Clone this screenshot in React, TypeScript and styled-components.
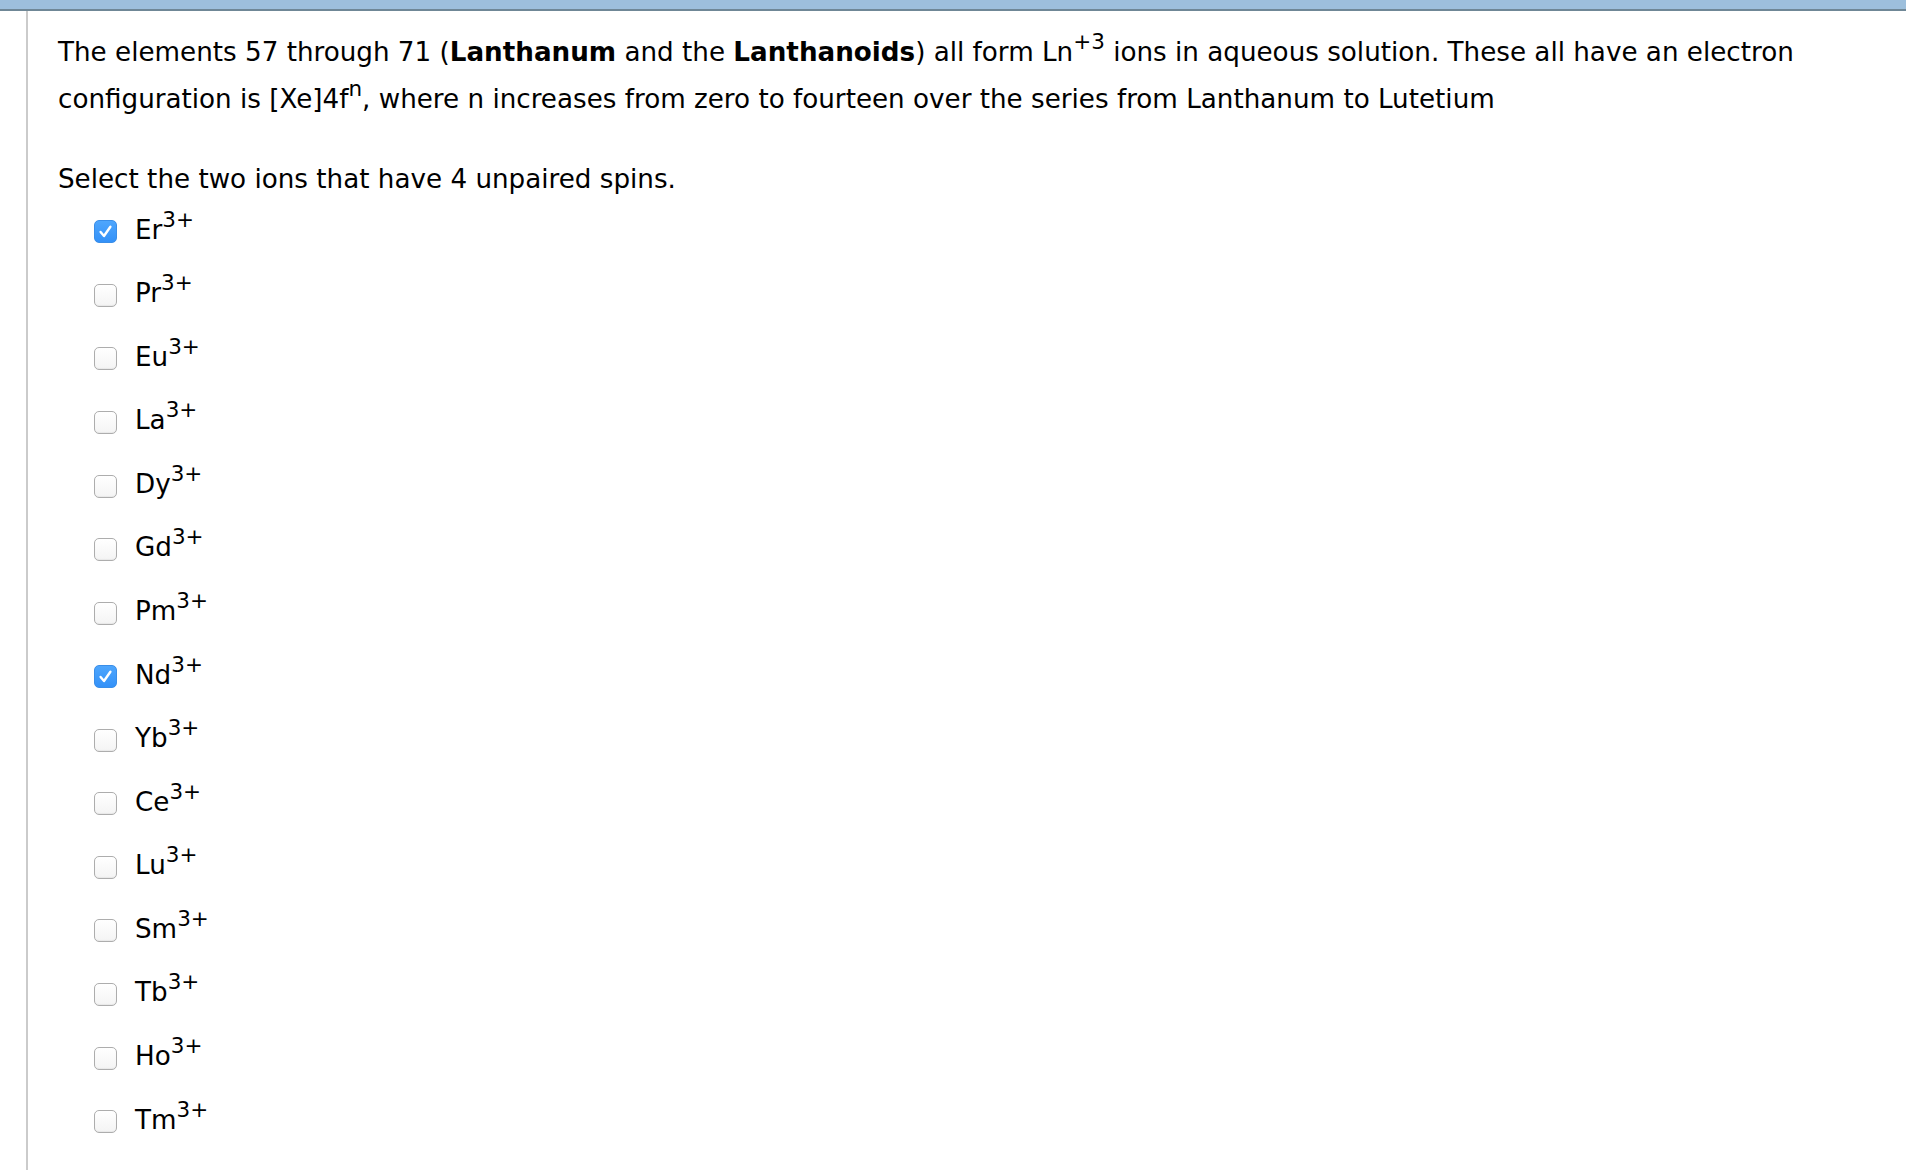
import styled, { createGlobalStyle } from "styled-components";

const GlobalStyle = createGlobalStyle`
  html, body {
    margin: 0;
    padding: 0;
    background: #ffffff;
  }
  body {
    font-family: "DejaVu Sans", Verdana, sans-serif;
    color: #000000;
  }
`;

const TopBar = styled.div`
  height: 9px;
  background-color: #9dbfdc;
  border-bottom: 2px solid #6f8796;
`;

const Page = styled.div`
  margin-left: 26px;
  border-left: 2px solid #cbcbcb;
  min-height: calc(100vh - 11px);
  padding: 18px 40px 0 30px;
  box-sizing: border-box;
`;

const Intro = styled.p`
  margin: 0;
  font-size: 26.2px;
  line-height: 47px;
`;

const Prompt = styled.p`
  margin: 33px 0 0 0;
  font-size: 26.2px;
  line-height: 47px;
`;

const Sup = styled.sup`
  font-size: 0.82em;
  line-height: 0;
  vertical-align: 0.55em;
`;

const OptionList = styled.ul`
  list-style: none;
  margin: -5px 0 0 0;
  padding: 0 0 0 36px;
`;

const OptionRow = styled.li`
  height: 63.57px;
  display: flex;
  align-items: center;
  gap: 18px;
  font-size: 26.2px;
`;

const Box = styled.span<{ $checked: boolean }>`
  width: 23px;
  height: 23px;
  box-sizing: border-box;
  border-radius: 5px;
  display: flex;
  align-items: center;
  justify-content: center;
  flex-shrink: 0;
  margin-top: 4px;
  background: ${(p) =>
    p.$checked ? "linear-gradient(#4ea6fd, #3391f8)" : "linear-gradient(#ffffff, #f4f4f4)"};
  border: 1px solid ${(p) => (p.$checked ? "#3a8ee8" : "#adadad")};
  box-shadow: ${(p) => (p.$checked ? "none" : "inset 0 -1px 1px rgba(0,0,0,0.05)")};
`;

const Label = styled.span`
  line-height: 1;
`;

const ions: { sym: string; checked: boolean }[] = [
  { sym: "Er", checked: true },
  { sym: "Pr", checked: false },
  { sym: "Eu", checked: false },
  { sym: "La", checked: false },
  { sym: "Dy", checked: false },
  { sym: "Gd", checked: false },
  { sym: "Pm", checked: false },
  { sym: "Nd", checked: true },
  { sym: "Yb", checked: false },
  { sym: "Ce", checked: false },
  { sym: "Lu", checked: false },
  { sym: "Sm", checked: false },
  { sym: "Tb", checked: false },
  { sym: "Ho", checked: false },
  { sym: "Tm", checked: false },
];

function Check() {
  return (
    <svg width="17" height="17" viewBox="0 0 17 17">
      <path
        d="M3.6 9 L7 13 L13.4 3.8"
        fill="none"
        stroke="#ffffff"
        strokeWidth="2.4"
        strokeLinecap="round"
        strokeLinejoin="round"
      />
    </svg>
  );
}

export default function App() {
  return (
    <>
      <GlobalStyle />
      <TopBar />
      <Page>
        <Intro>
          The elements 57 through 71 (<b>Lanthanum</b> and the <b>Lanthanoids</b>) all form Ln
          <Sup>+3</Sup> ions in aqueous solution. These all have an electron configuration is
          [Xe]4f<Sup>n</Sup>, where n increases from zero to fourteen over the series from
          Lanthanum to Lutetium
        </Intro>
        <Prompt>Select the two ions that have 4 unpaired spins.</Prompt>
        <OptionList>
          {ions.map((ion) => (
            <OptionRow key={ion.sym}>
              <Box $checked={ion.checked}>{ion.checked && <Check />}</Box>
              <Label>
                {ion.sym}
                <Sup>3+</Sup>
              </Label>
            </OptionRow>
          ))}
        </OptionList>
      </Page>
    </>
  );
}
